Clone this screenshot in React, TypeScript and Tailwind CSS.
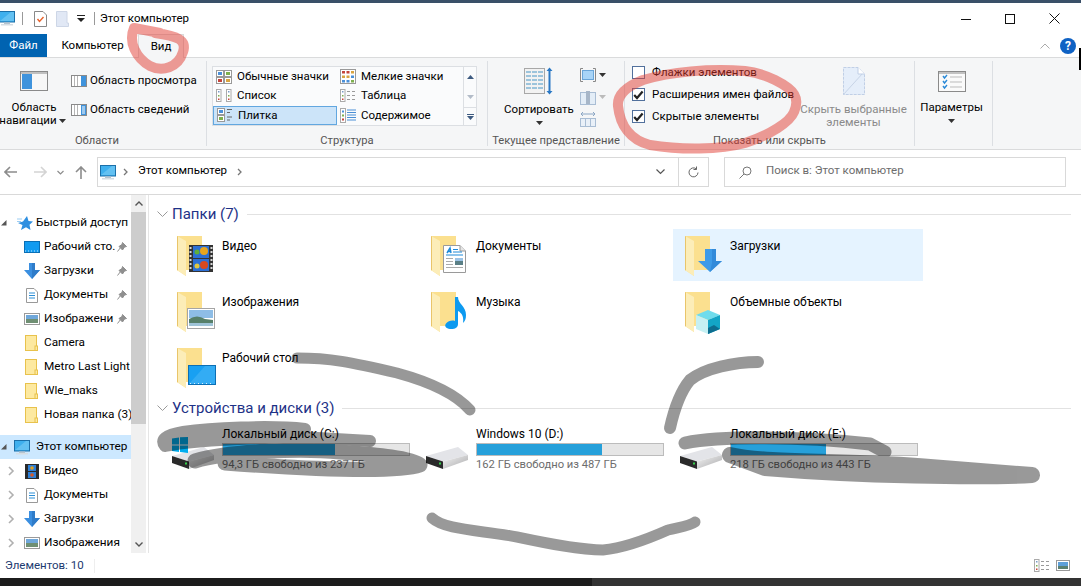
import React from 'react';

const FONT = 'font-["Roboto",sans-serif]';

const Monitor = ({ w = 16, h = 15 }: { w?: number; h?: number }) => (
  <svg width={w} height={h} viewBox="0 0 16 15" className="shrink-0">
    <rect x="0.5" y="0.5" width="15" height="10.5" fill="#3fb0ee" stroke="#1c6fa8" />
    <path d="M1 10 L12 1 L15 1 L15 10Z" fill="#7ccdf5" opacity=".6" />
    <rect x="5" y="11.5" width="6" height="1.5" fill="#b6c4cf" />
    <rect x="2" y="13" width="12" height="1.5" fill="#d5dde3" />
  </svg>
);

const Chevron = () => (
  <svg width="8" height="10" viewBox="0 0 8 10" className="shrink-0">
    <path d="M2 1 L6 5 L2 9" fill="none" stroke="#b0b0b0" strokeWidth="1.6" />
  </svg>
);

const Caret = () => (
  <svg width="7" height="4" viewBox="0 0 7 4" className="shrink-0">
    <path d="M0 0 H7 L3.5 4Z" fill="#333" />
  </svg>
);

const Check = ({ checked }: { checked?: boolean }) => (
  <span className="w-[13px] h-[13px] border border-[#51709c] bg-white shrink-0 flex items-center justify-center">
    {checked && (
      <svg width="11" height="10" viewBox="0 0 11 10">
        <path d="M1.2 5 L4 8 L9.6 1.5" fill="none" stroke="#222" strokeWidth="2.2" />
      </svg>
    )}
  </span>
);

const PaneSmall = ({ variant }: { variant: 'preview' | 'details' }) => (
  <svg width="16" height="12" viewBox="0 0 16 12" className="shrink-0">
    <rect x="0.5" y="0.5" width="15" height="11" fill="#fff" stroke="#8a8a8a" />
    <rect x="3" y="1" width="1" height="10" fill="#b5b5b5" />
    <rect x="6" y="1" width="1" height="10" fill="#b5b5b5" />
    <rect x="10" y="1" width="5" height="10" fill="#3f93dc" />
    {variant === 'details' && (
      <path d="M11 3 H14 M11 5 H14 M11 7 H14 M11 9 H14" stroke="#fff" strokeWidth="1" />
    )}
  </svg>
);

type GalleryKind = 'large' | 'small' | 'list' | 'table' | 'tile' | 'content';

const GalleryIcon = ({ kind }: { kind: GalleryKind }) => {
  const c = ['#4a90d9', '#7eb04e', '#c5453b', '#d9a441'];
  if (kind === 'large')
    return (
      <svg width="16" height="14" viewBox="0 0 16 14" className="shrink-0">
        {[0, 1, 2, 3].map((i) => (
          <g key={i}>
            <rect x={i % 2 ? 8.5 : 0.5} y={i < 2 ? 0.5 : 7.5} width="7" height="6" fill="#fff" stroke="#999" />
            <rect x={i % 2 ? 10 : 2} y={i < 2 ? 2 : 9} width="4" height="3" fill={c[i]} />
          </g>
        ))}
      </svg>
    );
  if (kind === 'small')
    return (
      <svg width="16" height="15" viewBox="0 0 16 15" className="shrink-0">
        <rect x="0.5" y="0.5" width="15" height="14" fill="#fff" stroke="#999" />
        {[2, 6.5, 11].map((x) =>
          [2, 6.5, 11].map((y, j) => <rect key={`${x}-${y}`} x={x} y={y} width="3" height="2.5" fill={c[(j + x) % 4 | 0]} />)
        )}
      </svg>
    );
  if (kind === 'list')
    return (
      <svg width="16" height="13" viewBox="0 0 16 13" className="shrink-0">
        {[0.5, 10.5].map((x) => (
          <g key={x}>
            <rect x={x} y="0.5" width="4.5" height="12" fill="#fff" stroke="#aaa" />
            <rect x={x + 1.5} y="2" width="1.5" height="1.5" fill="#7a9cc6" />
            <rect x={x + 1.5} y="6" width="1.5" height="1.5" fill="#7eb04e" />
            <rect x={x + 1.5} y="9.5" width="1.5" height="1.5" fill="#c5453b" />
          </g>
        ))}
      </svg>
    );
  if (kind === 'table')
    return (
      <svg width="16" height="13" viewBox="0 0 16 13" className="shrink-0">
        <rect x="0.5" y="0.5" width="4.5" height="12" fill="#fff" stroke="#aaa" />
        <path d="M7 2.5 H10 M12 2.5 H15 M7 6.5 H10 M12 6.5 H15 M7 10.5 H10 M12 10.5 H15" stroke="#9a9a9a" />
        <rect x="2" y="2" width="1.5" height="1.5" fill="#7a9cc6" />
        <rect x="2" y="6" width="1.5" height="1.5" fill="#7eb04e" />
        <rect x="2" y="9.5" width="1.5" height="1.5" fill="#c5453b" />
      </svg>
    );
  if (kind === 'tile')
    return (
      <svg width="16" height="14" viewBox="0 0 16 14" className="shrink-0">
        <rect x="0.5" y="0.5" width="7" height="6" fill="#fff" stroke="#999" />
        <rect x="2" y="2" width="4" height="3" fill="#4a90d9" />
        <rect x="0.5" y="7.5" width="7" height="6" fill="#fff" stroke="#999" />
        <rect x="2" y="9" width="4" height="3" fill="#7eb04e" />
        <path d="M10 1.5 H15 M10 4.5 H13 M10 9 H15 M10 12 H13" stroke="#666" />
      </svg>
    );
  return (
    <svg width="16" height="15" viewBox="0 0 16 15" className="shrink-0">
      <rect x="0.5" y="0.5" width="5" height="14" fill="#fff" stroke="#aaa" />
      <rect x="2" y="2.5" width="2" height="2" fill="#4a90d9" />
      <rect x="2" y="6.5" width="2" height="2" fill="#7eb04e" />
      <rect x="2" y="10.5" width="2" height="2" fill="#c5453b" />
      <path d="M7 2 H16 M7 4.5 H16 M7 7 H16 M7 9.5 H16 M7 12 H16" stroke="#4a8fd6" />
    </svg>
  );
};

const FolderSmall = () => (
  <svg width="13" height="16" viewBox="0 0 13 16" className="shrink-0">
    <rect x="0.5" y="0.5" width="11" height="15" fill="#fde9a0" stroke="#e8c24c" />
    <rect x="10" y="11" width="2.5" height="4.5" fill="#fde9a0" stroke="#e8c24c" />
  </svg>
);

const DesktopSmall = () => (
  <svg width="16" height="12" viewBox="0 0 16 12" className="shrink-0">
    <rect x="0.5" y="0.5" width="15" height="11" fill="#129bf0" stroke="#0a6fb5" />
    <path d="M1 10 H15" stroke="#bfe6ff" strokeDasharray="1 2" />
  </svg>
);

const ArrowDownSmall = () => (
  <svg width="16" height="16" viewBox="0 0 16 16" className="shrink-0">
    <path d="M5 0 H11 V7 H16 L8 16 L0 7 H5Z" fill="#3b8fe0" />
    <path d="M8 16 L16 7 H11 V0 H8Z" fill="#2f7cc9" />
  </svg>
);

const DocSmall = () => (
  <svg width="12" height="15" viewBox="0 0 12 15" className="shrink-0">
    <path d="M0.5 0.5 H8 L11.5 4 V14.5 H0.5Z" fill="#fff" stroke="#999" />
    <path d="M3 5 H9 M3 7.5 H9 M3 10 H9" stroke="#2b8ed6" />
  </svg>
);

const PicSmall = () => (
  <svg width="16" height="12" viewBox="0 0 16 12" className="shrink-0">
    <rect x="0.5" y="0.5" width="15" height="11" fill="#fff" stroke="#9a9a9a" />
    <rect x="2" y="2" width="12" height="4" fill="#6fa7da" />
    <rect x="2" y="6" width="12" height="4" fill="#6f8f73" />
  </svg>
);

const VideoSmall = () => (
  <svg width="14" height="15" viewBox="0 0 14 15" className="shrink-0">
    <rect width="14" height="15" fill="#2a2a2a" />
    <rect x="3" y="1" width="8" height="6" fill="#2d7fd6" />
    <rect x="3" y="8" width="8" height="6" fill="#2d7fd6" />
    <circle cx="7" cy="4" r="1.8" fill="#e0a020" />
    <circle cx="7" cy="11" r="1.8" fill="#d25a2a" />
  </svg>
);

const Pin = () => (
  <svg width="10" height="10" viewBox="0 0 10 10" className="shrink-0">
    <path d="M5.5 0.5 L9.5 4.5 L7.5 5 L5.5 8 L2 4.5 L5 2.5Z M3.2 6 L0.5 9.5" fill="#8f8f8f" stroke="#8f8f8f" />
  </svg>
);

const Star = () => (
  <svg width="16" height="15" viewBox="0 0 16 15" className="shrink-0">
    <path d="M10 0 L11.5 5 L16 5.5 L12.5 8.8 L13.5 14 L9 11.3 L4 14 L5.5 9 L1 7 L6 5.5Z" fill="#2e8fe0" />
    <path d="M0 3 H5 M0 5.5 H4" stroke="#9ccdf2" />
  </svg>
);

type Overlay = 'video' | 'doc' | 'download' | 'pictures' | 'music' | 'cube' | 'desktop';

const FolderTileIcon = ({ overlay }: { overlay: Overlay }) => (
  <svg width="40" height="44" viewBox="0 0 40 44" className="shrink-0">
    <path d="M0 0 H25 V34 H9 V40 L0 34Z" fill="#fbe08f" />
    <path d="M0 0 L9 5 V40 L0 34Z" fill="#fcedb8" />
    <path d="M0 0 L1 0.5 V34.5 L0 34Z" fill="#e9c56a" />
    {overlay === 'video' && (
      <g>
        <rect x="12" y="9" width="24" height="27" fill="#333" />
        <path d="M13.5 11 V35" stroke="#d8d8d8" strokeWidth="2" strokeDasharray="2 2" />
        <path d="M34.5 11 V35" stroke="#d8d8d8" strokeWidth="2" strokeDasharray="2 2" />
        <rect x="16" y="10" width="16" height="12" fill="#2c6fd4" />
        <rect x="16" y="23" width="16" height="12" fill="#2c6fd4" />
        <circle cx="27" cy="15" r="4" fill="#e8a51e" />
        <circle cx="20" cy="16" r="2.5" fill="#5fae3a" />
        <circle cx="27" cy="29" r="4" fill="#d8491f" />
        <circle cx="20" cy="30" r="2.5" fill="#e0c640" />
      </g>
    )}
    {overlay === 'doc' && (
      <g>
        <path d="M12.5 9.5 H29 L34.5 15 V36.5 H12.5Z" fill="#fff" stroke="#9a9a9a" />
        <path d="M29 9.5 V15 H34.5" fill="#e5e5e5" stroke="#9a9a9a" />
        <path d="M16 17 L19 12 L20 17 M17 15.5 H19.5" stroke="#1f8ad8" strokeWidth="1.5" fill="none" />
        <path d="M22 13.5 H27 M22 16 H31 M15 19 H32" stroke="#1f8ad8" />
        <path d="M15 22.5 H22 M15 25.5 H22 M15 28.5 H22 M15 31.5 H32" stroke="#aaa" />
        <rect x="24" y="22" width="8" height="7" fill="#5a7f85" />
        <rect x="24" y="22" width="8" height="3" fill="#9bc3e6" />
      </g>
    )}
    {overlay === 'download' && (
      <g>
        <path d="M20 13 H31 V25 H37 L25 36 L13 25 H20Z" fill="#3e9be8" />
        <path d="M25 36 L37 25 H31 V13 H27 V27Z" fill="#2f86d6" opacity=".8" />
      </g>
    )}
    {overlay === 'pictures' && (
      <g>
        <rect x="10.5" y="16.5" width="27" height="20" fill="#fff" stroke="#a5a5a5" />
        <rect x="12" y="18" width="24" height="8" fill="#8ebde6" />
        <path d="M12 27 Q20 22 28 27 L36 28 V34 H12Z" fill="#57806a" />
        <rect x="12" y="31" width="24" height="3" fill="#9fc4d8" />
      </g>
    )}
    {overlay === 'music' && (
      <path
        d="M24 5 H27 C27 12 35 14 35 23 C35 27 34 29 32 31 C33 25 31 21 27 19 V32 C27 36 23 37.5 19 37 C15 36.5 13 34 15 31.5 C17 29 21 28 24 29Z"
        fill="#0d9af0"
      />
    )}
    {overlay === 'cube' && (
      <g>
        <path d="M11 23 L23 18 L35 23 L23 28Z" fill="#6fdcec" />
        <path d="M11 23 L23 28 V42 L11 37Z" fill="#c5f0f3" />
        <path d="M35 23 L23 28 V42 L35 37Z" fill="#13a5c6" />
        <path d="M23 42 L35 37 L29 33 L23 36Z" fill="#0d6d8f" />
      </g>
    )}
    {overlay === 'desktop' && (
      <g>
        <rect x="11.5" y="17.5" width="27" height="19" fill="#18a0f2" stroke="#0c6fb4" />
        <path d="M12 36 L28 18 H38 V36Z" fill="#54bbf6" opacity=".45" />
        <path d="M13 35.5 H37" stroke="#d6efff" strokeDasharray="1 3" />
      </g>
    )}
  </svg>
);

const DriveIcon = () => (
  <svg width="42" height="23" viewBox="0 0 42 23" className="shrink-0">
    <defs>
      <linearGradient id="driveFace" x1="0" y1="0" x2="1" y2="1">
        <stop offset="0" stopColor="#f4f4f4" />
        <stop offset="1" stopColor="#a9a9ab" />
      </linearGradient>
    </defs>
    <path d="M0 9 L32 0 L42 8 L17 14.5Z" fill="#e3e4e8" />
    <path d="M17 14.5 L42 8 V13 L17 22Z" fill="url(#driveFace)" />
    <path d="M0 9 L17 14.5 V22 L0 16Z" fill="#2a2a2a" />
    <rect x="13" y="15.5" width="2" height="2" fill="#35d04a" />
  </svg>
);

const WinLogo = () => (
  <svg width="16" height="16" viewBox="0 0 16 16" className="absolute left-[7px] top-[14px]">
    <path d="M0 1.5 L7 0.5 V7.5 H0Z M8 0.3 L16 0 V7.5 H8Z M0 8.5 H7 V15 L0 14Z M8 8.5 H16 V16 L8 15Z" fill="#00adef" />
  </svg>
);

const Bar = ({ pct }: { pct: number }) => (
  <div className="w-[188px] h-[13px] bg-[#e6e6e6] border border-[#bcbcbc]">
    <div className="h-full bg-[#26a0da]" style={{ width: `${pct}%` }} />
  </div>
);

const navRows = [
  { icon: <DesktopSmall />, label: 'Рабочий сто.', pin: true },
  { icon: <ArrowDownSmall />, label: 'Загрузки', pin: true },
  { icon: <DocSmall />, label: 'Документы', pin: true },
  { icon: <PicSmall />, label: 'Изображени', pin: true },
  { icon: <FolderSmall />, label: 'Camera' },
  { icon: <FolderSmall />, label: 'Metro Last Light' },
  { icon: <FolderSmall />, label: 'Wle_maks' },
  { icon: <FolderSmall />, label: 'Новая папка (3)' },
];

const pcRows = [
  { icon: <VideoSmall />, label: 'Видео' },
  { icon: <DocSmall />, label: 'Документы' },
  { icon: <ArrowDownSmall />, label: 'Загрузки' },
  { icon: <PicSmall />, label: 'Изображения' },
];

const folders: { name: string; overlay: Overlay; active?: boolean }[] = [
  { name: 'Видео', overlay: 'video' },
  { name: 'Документы', overlay: 'doc' },
  { name: 'Загрузки', overlay: 'download', active: true },
  { name: 'Изображения', overlay: 'pictures' },
  { name: 'Музыка', overlay: 'music' },
  { name: 'Объемные объекты', overlay: 'cube' },
  { name: 'Рабочий стол', overlay: 'desktop' },
];

const drives = [
  { name: 'Локальный диск (C:)', free: '94,3 ГБ свободно из 237 ГБ', pct: 60, win: true },
  { name: 'Windows 10 (D:)', free: '162 ГБ свободно из 487 ГБ', pct: 67 },
  { name: 'Локальный диск (E:)', free: '218 ГБ свободно из 443 ГБ', pct: 51 },
];

const gallery: { kind: GalleryKind; label: string; active?: boolean }[] = [
  { kind: 'large', label: 'Обычные значки' },
  { kind: 'small', label: 'Мелкие значки' },
  { kind: 'list', label: 'Список' },
  { kind: 'table', label: 'Таблица' },
  { kind: 'tile', label: 'Плитка', active: true },
  { kind: 'content', label: 'Содержимое' },
];

function RibbonGroup({ width, label, labelClass = '', children }: { width: string; label: string; labelClass?: string; children: React.ReactNode }) {
  return (
    <div className={`${width} h-[85px] mt-[3px] border-r border-[#dcdfe3] flex flex-col shrink-0`}>
      <div className="flex-1 min-h-0 flex">{children}</div>
      <div className={`h-[14px] leading-[14px] -mb-[2px] text-center text-[#555] text-[11.2px] whitespace-nowrap ${labelClass}`}>{label}</div>
    </div>
  );
}

function SectionHeader({ title, count }: { title: string; count: number }) {
  return (
    <div className="flex items-center h-[20px] pl-[8px]">
      <svg width="11" height="7" viewBox="0 0 11 7" className="shrink-0">
        <path d="M0.5 0.5 L5.5 5.5 L10.5 0.5" fill="none" stroke="#9a9a9a" />
      </svg>
      <span className="ml-[4px] text-[15px] text-[#1e3287] whitespace-nowrap">
        {title} ({count})
      </span>
      <div className="flex-1 h-px bg-[#e2e2e2] ml-[8px] mr-[10px]" />
    </div>
  );
}

export default function App() {
  return (
    <div className={`${FONT} relative w-[1081px] h-[586px] overflow-hidden bg-white flex flex-col text-[11.5px] text-black`}>
      <div className="h-[3px] bg-[#3a5068] shrink-0" />

      {/* title bar */}
      <div className="h-[31px] flex items-center shrink-0 relative">
        <div className="w-[16px] overflow-hidden -ml-[1px]">
          <Monitor />
        </div>
        <div className="w-px h-[13px] bg-[#999] ml-[7px]" />
        <svg width="13" height="16" viewBox="0 0 13 16" className="ml-[11px]">
          <path d="M0.5 0.5 H9 L12.5 4 V15.5 H0.5Z" fill="#fff" stroke="#888" />
          <path d="M3.5 8 L5.5 10.5 L9.5 6" fill="none" stroke="#e8622a" strokeWidth="1.4" />
        </svg>
        <svg width="13" height="16" viewBox="0 0 13 16" className="ml-[9px]">
          <path d="M0.5 0.5 H11 V12 L12.5 12 V15.5 H0.5Z" fill="#e1e8f5" stroke="#cdd6e6" />
        </svg>
        <svg width="8" height="7" viewBox="0 0 8 7" className="ml-[8px]">
          <path d="M0 0 H8 V1 H0Z M0 3 H8 L4 7Z" fill="#222" />
        </svg>
        <div className="w-px h-[13px] bg-[#999] ml-[9px]" />
        <span className="ml-[5px] whitespace-nowrap">Этот компьютер</span>
        <div className="ml-auto flex items-center pr-[21px] gap-[34px]">
          <svg width="10" height="10" viewBox="0 0 10 10">
            <path d="M0 5.5 H10" stroke="#111" />
          </svg>
          <svg width="10" height="10" viewBox="0 0 10 10">
            <rect x="0.5" y="0.5" width="9" height="9" fill="none" stroke="#111" />
          </svg>
          <svg width="11" height="11" viewBox="0 0 11 11">
            <path d="M0.5 0.5 L10.5 10.5 M10.5 0.5 L0.5 10.5" stroke="#111" />
          </svg>
        </div>
      </div>

      {/* tabs */}
      <div className="h-[23px] flex items-stretch shrink-0 border-b border-[#dadbdc] box-content">
        <div className="w-[47px] bg-[#0063b1] text-white flex items-center justify-center">Файл</div>
        <div className="w-[91px] flex items-center justify-center">Компьютер</div>
        <div className="w-[46px] flex items-center justify-center border-x border-t border-[#dadbdc] bg-[#f5f6f7] -mb-px">Вид</div>
        <div className="ml-auto flex items-center pr-[5px] gap-[10px]">
          <svg width="10" height="6" viewBox="0 0 10 6">
            <path d="M0.5 5.5 L5 1 L9.5 5.5" fill="none" stroke="#aaa" />
          </svg>
          <span className="w-[16px] h-[16px] rounded-full bg-[#0f62c4] text-white text-[12px] font-bold flex items-center justify-center">?</span>
        </div>
      </div>

      {/* ribbon */}
      <div className="h-[91px] bg-[#f5f6f7] border-b border-[#dadbdc] flex shrink-0 box-content">
        <RibbonGroup width="w-[207px]" label="Области" labelClass="pr-[12px]">
          <div className="w-[68px] flex flex-col items-center pt-[10px] shrink-0">
            <svg width="28" height="20" viewBox="0 0 28 20">
              <rect x="0.5" y="0.5" width="27" height="19" fill="#f7f7f7" stroke="#8a8a8a" />
              <rect x="1" y="1.5" width="26" height="1" fill="#8a8a8a" />
              <rect x="2" y="3" width="10" height="15" fill="#3f93dc" />
            </svg>
            <div className="mt-[10px] leading-[13px] text-center whitespace-nowrap">Область</div>
            <div className="leading-[13px] whitespace-nowrap flex items-center gap-[2px] -ml-[3px]">
              навигации <Caret />
            </div>
          </div>
          <div className="flex flex-col pl-[3px] pt-[12px] gap-[13px]">
            <div className="h-[16px] flex items-center gap-[3px] whitespace-nowrap">
              <PaneSmall variant="preview" />
              Область просмотра
            </div>
            <div className="h-[16px] flex items-center gap-[3px] whitespace-nowrap">
              <PaneSmall variant="details" />
              Область сведений
            </div>
          </div>
        </RibbonGroup>

        <RibbonGroup width="w-[281px]" label="Структура">
          <div className="ml-[5px] mt-[5px] w-[265px] h-[60px] border border-[#dcdfe3] bg-[#fafbfc] flex">
            <div className="w-[250px] grid grid-cols-[124px_126px] grid-rows-3">
              {gallery.map((g) => (
                <div
                  key={g.label}
                  className={`flex items-center gap-[5px] pl-[3px] whitespace-nowrap ${
                    g.active ? 'bg-[#cce4f9] border border-[#62a7e0] pl-[2px]' : ''
                  }`}
                >
                  <GalleryIcon kind={g.kind} />
                  {g.label}
                </div>
              ))}
            </div>
            <div className="flex-1 border-l border-[#dcdfe3] flex flex-col items-center">
              <div className="h-[20px] flex items-center">
                <svg width="7" height="4" viewBox="0 0 7 4">
                  <path d="M0 4 H7 L3.5 0Z" fill="#3d5a80" />
                </svg>
              </div>
              <div className="h-[20px] flex items-center">
                <svg width="7" height="4" viewBox="0 0 7 4">
                  <path d="M0 0 H7 L3.5 4Z" fill="#b3bcc8" />
                </svg>
              </div>
              <div className="h-[18px] w-full flex flex-col items-center justify-center gap-px border-t border-[#dcdfe3]">
                <div className="w-[7px] h-px bg-[#3d5a80]" />
                <svg width="7" height="4" viewBox="0 0 7 4">
                  <path d="M0 0 H7 L3.5 4Z" fill="#3d5a80" />
                </svg>
              </div>
            </div>
          </div>
        </RibbonGroup>

        <RibbonGroup width="w-[137px]" label="Текущее представление">
          <div className="w-[92px] flex flex-col items-center pt-[6px] pl-[10px] shrink-0">
            <svg width="30" height="28" viewBox="0 0 30 28">
              <rect x="0.5" y="1.5" width="20" height="25" fill="#f2f2f2" stroke="#a8a8a8" />
              <path d="M2 5 H19 M2 9 H19 M2 13 H19 M2 17 H19 M2 21 H19" stroke="#9cc4dc" strokeWidth="2" strokeDasharray="5 1" />
              <path d="M25.5 2 V26" stroke="#2a78c4" strokeWidth="2" />
              <path d="M22.5 4 L25.5 0.5 L28.5 4Z M22.5 24 L25.5 27.5 L28.5 24Z" fill="#2a78c4" />
            </svg>
            <div className="mt-[8px] leading-[13px] whitespace-nowrap">Сортировать</div>
            <div className="h-[13px] flex items-center">
              <Caret />
            </div>
          </div>
          <div className="flex flex-col pt-[6px] gap-[6px]">
            <div className="h-[16px] flex items-center gap-[3px]">
              <svg width="16" height="14" viewBox="0 0 16 14">
                <path d="M3 0.5 H0.5 V13.5 H3 M13 0.5 H15.5 V13.5 H13" fill="none" stroke="#888" />
                <rect x="2.5" y="2.5" width="11" height="9" fill="#a8d4f7" stroke="#6aa5d8" />
              </svg>
              <Caret />
            </div>
            <div className="h-[16px] flex items-center gap-[3px]">
              <svg width="16" height="15" viewBox="0 0 16 15">
                <rect x="0.5" y="2.5" width="15" height="12" fill="#e3edf7" stroke="#a9bdd4" />
                <rect x="6" y="1" width="4" height="13" fill="#a7b6c8" />
              </svg>
              <svg width="7" height="4" viewBox="0 0 7 4">
                <path d="M0 0 H7 L3.5 4Z" fill="#bbb" />
              </svg>
            </div>
            <svg width="16" height="16" viewBox="0 0 16 16">
              <path d="M1 3 H15 M3 1 L1 3 L3 5 M13 1 L15 3 L13 5" fill="none" stroke="#8ba6c4" />
              <rect x="0.5" y="7.5" width="15" height="8" fill="#e9f0f8" stroke="#a9bdd4" />
              <path d="M5.5 8 V15 M10.5 8 V15" stroke="#a9bdd4" />
            </svg>
          </div>
        </RibbonGroup>

        <RibbonGroup width="w-[290px]" label="Показать или скрыть">
          <div className="w-[189px] flex flex-col pl-[7px] pt-[5px] gap-[9px] shrink-0">
            {[
              { label: 'Флажки элементов', on: false },
              { label: 'Расширения имен файлов', on: true },
              { label: 'Скрытые элементы', on: true },
            ].map((c) => (
              <div key={c.label} className="h-[13px] flex items-center gap-[7px] whitespace-nowrap">
                <Check checked={c.on} />
                {c.label}
              </div>
            ))}
          </div>
          <div className="w-[79px] flex flex-col items-center pt-[6px] text-[#8a8a8a]">
            <svg width="22" height="28" viewBox="0 0 22 28">
              <path d="M0.5 0.5 H15 L21.5 7 V27.5 H0.5Z" fill="#e5eefa" stroke="#c0cfe6" strokeDasharray="3 1" />
              <path d="M0 28 L20 6" stroke="#c7d4e6" />
              <path d="M15 0.5 V7 H21.5" fill="#fff" stroke="#c0cfe6" />
            </svg>
            <div className="mt-[8px] leading-[13px] whitespace-nowrap">Скрыть выбранные</div>
            <div className="leading-[13px]">элементы</div>
          </div>
        </RibbonGroup>

        <RibbonGroup width="w-[78px]" label="">
          <div className="w-full flex flex-col items-center pt-[10px] pr-[4px]">
            <svg width="28" height="21" viewBox="0 0 28 21">
              <rect x="0.5" y="0.5" width="27" height="20" fill="#fafafa" stroke="#8a8a8a" />
              <rect x="1" y="1.5" width="26" height="1" fill="#8a8a8a" />
              <path d="M5 5 L6.5 7 L9 4 M5 10 L6.5 12 L9 9 M5 15 L6.5 17 L9 14" fill="none" stroke="#2a8ad8" strokeWidth="1.4" />
              <path d="M12 6 H24 M12 11 H24 M12 16 H24" stroke="#bbb" />
            </svg>
            <div className="mt-[9px] leading-[13px] whitespace-nowrap">Параметры</div>
            <div className="h-[13px] flex items-center">
              <Caret />
            </div>
          </div>
        </RibbonGroup>
      </div>

      {/* address bar */}
      <div className="h-[44px] border-b border-[#d9d9d9] flex items-center shrink-0 box-content pl-[4px] pr-[15px]">
        <div className="w-[93px] flex items-center shrink-0">
          <svg width="13" height="12" viewBox="0 0 13 12">
            <path d="M6 1 L1 6 L6 11 M1 6 H13" fill="none" stroke="#8c8c8c" strokeWidth="1.6" />
          </svg>
          <svg width="13" height="12" viewBox="0 0 13 12" className="ml-[17px]">
            <path d="M7 1 L12 6 L7 11 M12 6 H0" fill="none" stroke="#d4d4d4" strokeWidth="1.6" />
          </svg>
          <svg width="7" height="5" viewBox="0 0 7 5" className="ml-[10px]">
            <path d="M0.5 1 L3.5 4 L6.5 1" fill="none" stroke="#8c8c8c" strokeWidth="1.2" />
          </svg>
          <svg width="12" height="13" viewBox="0 0 12 13" className="ml-[11px]">
            <path d="M1 6 L6 1 L11 6 M6 1 V13" fill="none" stroke="#8c8c8c" strokeWidth="1.6" />
          </svg>
        </div>
        <div className="w-[612px] h-[30px] border border-[#d9d9d9] flex items-center shrink-0">
          <div className="ml-[2px]">
            <Monitor />
          </div>
          <svg width="6" height="8" viewBox="0 0 6 8" className="ml-[7px]">
            <path d="M1 1 L4 4 L1 7" fill="none" stroke="#777" strokeWidth="1.3" />
          </svg>
          <span className="ml-[9px] whitespace-nowrap -mt-[2px]">Этот компьютер</span>
          <svg width="6" height="8" viewBox="0 0 6 8" className="ml-[10px]">
            <path d="M1 1 L4 4 L1 7" fill="none" stroke="#777" strokeWidth="1.3" />
          </svg>
          <svg width="9" height="6" viewBox="0 0 9 6" className="ml-auto mr-[47px]">
            <path d="M0.5 0.5 L4.5 4.5 L8.5 0.5" fill="none" stroke="#555" strokeWidth="1.2" />
          </svg>
          <div className="w-px h-full bg-[#d9d9d9] -ml-[34px] mr-[8px]" />
          <svg width="13" height="13" viewBox="0 0 13 13" className="mr-[8px]">
            <path d="M11 6.5 A4.5 4.5 0 1 1 9.5 3 M9.5 0.5 V3.5 H6.5" fill="none" stroke="#666" />
          </svg>
        </div>
        <div className="ml-[15px] flex-1 h-[30px] border border-[#d9d9d9] flex items-center text-[#6d6d6d]">
          <svg width="13" height="13" viewBox="0 0 13 13" className="ml-[14px]">
            <circle cx="8" cy="5" r="4" fill="none" stroke="#777" />
            <path d="M5 8 L0.5 12.5" stroke="#777" />
          </svg>
          <span className="ml-[14px] whitespace-nowrap -mt-[2px]">Поиск в: Этот компьютер</span>
        </div>
      </div>

      {/* body */}
      <div className="flex h-[358px] shrink-0 text-[12px]">
        <div className="w-[146px] shrink-0 flex relative text-[11.8px]">
          <div className="w-[131px] pt-[16px] overflow-hidden">
            <div className="h-[24px] flex items-center whitespace-nowrap">
              <div className="w-[17px] pl-[1px]">
                <svg width="6" height="6" viewBox="0 0 6 6">
                  <path d="M0 5.5 L5.5 5.5 L5.5 0Z" fill="#555" />
                </svg>
              </div>
              <Star />
              <span className="ml-[3px]">Быстрый доступ</span>
            </div>
            {navRows.map((r) => (
              <div key={r.label} className="h-[24px] flex items-center whitespace-nowrap relative">
                <div className="w-[23px] shrink-0" />
                <div className="w-[17px] flex justify-center shrink-0">{r.icon}</div>
                <span className="ml-[4px]">{r.label}</span>
                {r.pin && (
                  <div className="absolute left-[117px] top-[7px]">
                    <Pin />
                  </div>
                )}
              </div>
            ))}
            <div className="h-[24px] mt-[8px] flex items-center whitespace-nowrap bg-[#cce8ff]">
              <div className="w-[14px] pl-[1px]">
                <svg width="6" height="6" viewBox="0 0 6 6">
                  <path d="M0 5.5 L5.5 5.5 L5.5 0Z" fill="#555" />
                </svg>
              </div>
              <Monitor />
              <span className="ml-[6px]">Этот компьютер</span>
            </div>
            {pcRows.map((r) => (
              <div key={r.label} className="h-[24px] flex items-center whitespace-nowrap">
                <div className="w-[23px] pl-[7px] shrink-0">
                  <Chevron />
                </div>
                <div className="w-[17px] flex justify-center shrink-0">{r.icon}</div>
                <span className="ml-[4px]">{r.label}</span>
              </div>
            ))}
          </div>
          <div className="w-[15px] bg-[#f0f0f0] flex flex-col items-center">
            <div className="h-[17px] flex items-center">
              <svg width="8" height="5" viewBox="0 0 8 5">
                <path d="M0.5 4.5 L4 1 L7.5 4.5" fill="none" stroke="#555" strokeWidth="1.4" />
              </svg>
            </div>
            <div className="w-full h-[212px] bg-[#cdcdcd]" />
            <div className="mt-auto h-[17px] flex items-center">
              <svg width="8" height="5" viewBox="0 0 8 5">
                <path d="M0.5 0.5 L4 4 L7.5 0.5" fill="none" stroke="#555" strokeWidth="1.4" />
              </svg>
            </div>
          </div>
        </div>
        <div className="w-[3px] border-r border-[#e5e5e5] shrink-0" />
        <div className="flex-1 min-w-0 pt-[9px]">
          <SectionHeader title="Папки" count={7} />
          <div className="grid grid-cols-[254px_254px_250px] auto-rows-[56px] ml-[16px] mt-[5px]">
            {folders.map((f) => (
              <div key={f.name} className={`h-[52px] flex pl-[12px] pt-[7px] ${f.active ? 'bg-[#e5f3ff]' : ''}`}>
                <FolderTileIcon overlay={f.overlay} />
                <span className="ml-[5px] mt-[1px] leading-[18px] whitespace-nowrap">{f.name}</span>
              </div>
            ))}
          </div>
          <div className="mt-[1px]">
            <SectionHeader title="Устройства и диски" count={3} />
          </div>
          <div className="grid grid-cols-[254px_254px_250px] ml-[16px] mt-[5px]">
            {drives.map((d) => (
              <div key={d.name} className="h-[52px] flex pl-[7px] relative">
                {d.win && <WinLogo />}
                <div className="pt-[24px]">
                  <DriveIcon />
                </div>
                <div className="ml-[8px] pt-[3px]">
                  <div className="leading-[16px] whitespace-nowrap">{d.name}</div>
                  <div className="mt-[1px]">
                    <Bar pct={d.pct} />
                  </div>
                  <div className="mt-[1px] leading-[16px] text-[11.2px] text-[#6d6d6d] whitespace-nowrap">{d.free}</div>
                </div>
              </div>
            ))}
          </div>
        </div>
      </div>

      {/* status bar */}
      <div className="h-[25px] flex items-center pl-[5px] pr-[11px] shrink-0 text-[#1c3a70]">
        <span className="whitespace-nowrap">Элементов: 10</span>
        <div className="w-px h-[14px] bg-[#eee] ml-[10px]" />
        <div className="ml-auto flex items-center gap-[6px]">
          <GalleryIcon kind="table" />
          <svg width="14" height="11" viewBox="0 0 14 11">
            <rect x="0.5" y="0.5" width="13" height="10" fill="#fff" stroke="#999" />
            <rect x="2" y="2" width="10" height="4" fill="#5d9fd8" />
            <rect x="2" y="6" width="10" height="3" fill="#5a8070" />
          </svg>
        </div>
      </div>

      {/* screen edge behind the window */}
      <div className="flex-1 flex">
        <div className="w-[592px] bg-[#1c1c1c]" />
        <div className="flex-1 bg-[#333333]" />
      </div>
      <div className="absolute right-0 top-[48px] w-[2px] h-[22px] bg-black" />

      {/* hand-drawn marks on top of the screenshot */}
      <svg width="1081" height="586" viewBox="0 0 1081 586" className="absolute inset-0 pointer-events-none" fill="none" strokeLinecap="round" strokeLinejoin="round">
        <path
          d="M134 28 C 128 42, 136 58, 150 66 C 162 72, 178 68, 183 52 C 187 40, 178 36, 155 33 M134 28 L 160 33"
          stroke="#e23c32"
          strokeOpacity=".5"
          strokeWidth="10"
        />
        <path
          d="M745 71 C 710 68, 670 72, 643 80 C 625 87, 617 95, 618 106 C 620 125, 630 140, 650 145 C 680 150, 720 150, 745 143 C 770 135, 790 122, 794 112 C 800 98, 795 90, 775 80 C 765 75, 755 72, 745 71"
          stroke="#e23c32"
          strokeOpacity=".5"
          strokeWidth="10"
        />
        <g opacity=".4" stroke="#000">
          <path strokeWidth="11" d="M297 358 C 330 358, 350 362, 397 373 C 430 382, 455 393, 470 410" />
          <path strokeWidth="12" d="M758 362 C 735 362, 705 368, 690 380 C 680 392, 674 410, 670 428" />
          <path strokeWidth="11" d="M432 518 C 445 530, 480 530, 517 537 C 550 544, 580 550, 603 550 C 625 548, 650 538, 668 530 C 680 527, 690 526, 695 522" />
          <path
            strokeWidth="12"
            d="M305 429 C 270 425, 210 428, 183 432 C 165 435, 160 440, 165 446 C 190 440, 250 438, 300 437 L 370 441"
          />
          <path strokeWidth="15" d="M195 461 C 230 451, 300 448, 340 452 C 380 455, 410 458, 420 465 C 400 472, 320 470, 225 463" />
          <path strokeWidth="13" d="M685 443 C 720 436, 800 436, 870 444 L 885 452" />
          <path strokeWidth="16" d="M730 455 C 770 464, 850 460, 930 467 L 1032 475 C 980 478, 860 476, 765 468 L 730 455" />
        </g>
      </svg>
    </div>
  );
}
